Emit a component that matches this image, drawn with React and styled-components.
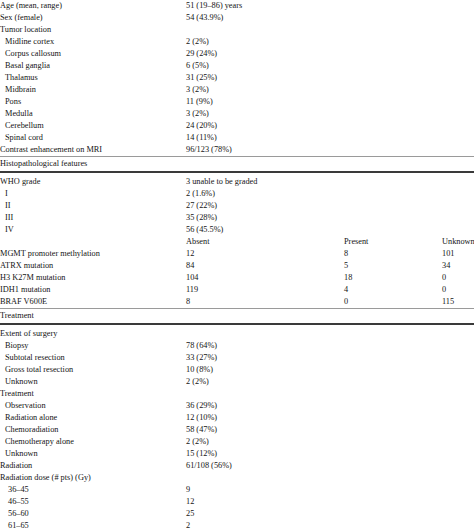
import React from "react";
import styled, { createGlobalStyle } from "styled-components";

const GlobalStyle = createGlobalStyle`
  html, body {
    margin: 0;
    padding: 0;
    background: #fff;
  }
  body {
    font-family: "Liberation Serif", "Times New Roman", serif;
    color: #141414;
  }
`;

const Table = styled.div`
  width: 474px;
  height: 532px;
  overflow: hidden;
  display: flex;
  flex-direction: column;
`;

const Row = styled.div`
  display: grid;
  grid-template-columns: 186px 158px 98px 1fr;
  height: 12px;
  line-height: 12px;
  font-size: 8.3px;
  white-space: nowrap;
`;

const Label = styled.div`
  padding-left: ${(p) => p.indent || 0}px;
  overflow: visible;
`;

const Cell = styled.div`
  overflow: visible;
`;

const Thin = styled.div`
  height: 1px;
  background: #9a9a9a;
`;

const Thick = styled.div`
  height: 2px;
  background: #3a3a3a;
  margin-bottom: 3px;
`;

const Header = styled.div`
  height: 14px;
  line-height: 14px;
  font-size: 8.3px;
  white-space: nowrap;
`;

const top = [
  ["Age (mean, range)", "51 (19\u201386) years"],
  ["Sex (female)", "54 (43.9%)"],
  ["Tumor location", ""],
  ["Midline cortex", "2 (2%)", 5],
  ["Corpus callosum", "29 (24%)", 5],
  ["Basal ganglia", "6 (5%)", 5],
  ["Thalamus", "31 (25%)", 5],
  ["Midbrain", "3 (2%)", 5],
  ["Pons", "11 (9%)", 5],
  ["Medulla", "3 (2%)", 5],
  ["Cerebellum", "24 (20%)", 5],
  ["Spinal cord", "14 (11%)", 5],
  ["Contrast enhancement on MRI", "96/123 (78%)"],
];

const histo = [
  ["WHO grade", "3 unable to be graded"],
  ["I", "2 (1.6%)", 5],
  ["II", "27 (22%)", 5],
  ["III", "35 (28%)", 5],
  ["IV", "56 (45.5%)", 5],
  ["", "Absent", 0, "Present", "Unknown"],
  ["MGMT promoter methylation", "12", 0, "8", "101"],
  ["ATRX mutation", "84", 0, "5", "34"],
  ["H3 K27M mutation", "104", 0, "18", "0"],
  ["IDH1 mutation", "119", 0, "4", "0"],
  ["BRAF V600E", "8", 0, "0", "115"],
];

const treatment = [
  ["Extent of surgery", ""],
  ["Biopsy", "78 (64%)", 5],
  ["Subtotal resection", "33 (27%)", 5],
  ["Gross total resection", "10 (8%)", 5],
  ["Unknown", "2 (2%)", 5],
  ["Treatment", ""],
  ["Observation", "36 (29%)", 5],
  ["Radiation alone", "12 (10%)", 5],
  ["Chemoradiation", "58 (47%)", 5],
  ["Chemotherapy alone", "2 (2%)", 5],
  ["Unknown", "15 (12%)", 5],
  ["Radiation", "61/108 (56%)"],
  ["Radiation dose (# pts) (Gy)", ""],
  ["36\u201345", "9", 8],
  ["46\u201355", "12", 8],
  ["56\u201360", "25", 8],
  ["61\u201365", "2", 8],
];

function Rows({ data }) {
  return data.map(([label, a, indent, b, c], i) => (
    <Row key={i}>
      <Label indent={indent}>{label}</Label>
      <Cell>{a}</Cell>
      <Cell>{b}</Cell>
      <Cell>{c}</Cell>
    </Row>
  ));
}

export default function App() {
  return (
    <>
      <GlobalStyle />
      <Table>
        <Rows data={top} />
        <Thin />
        <Header>Histopathological features</Header>
        <Thick />
        <Rows data={histo} />
        <Thin />
        <Header>Treatment</Header>
        <Thick />
        <Rows data={treatment} />
      </Table>
    </>
  );
}
